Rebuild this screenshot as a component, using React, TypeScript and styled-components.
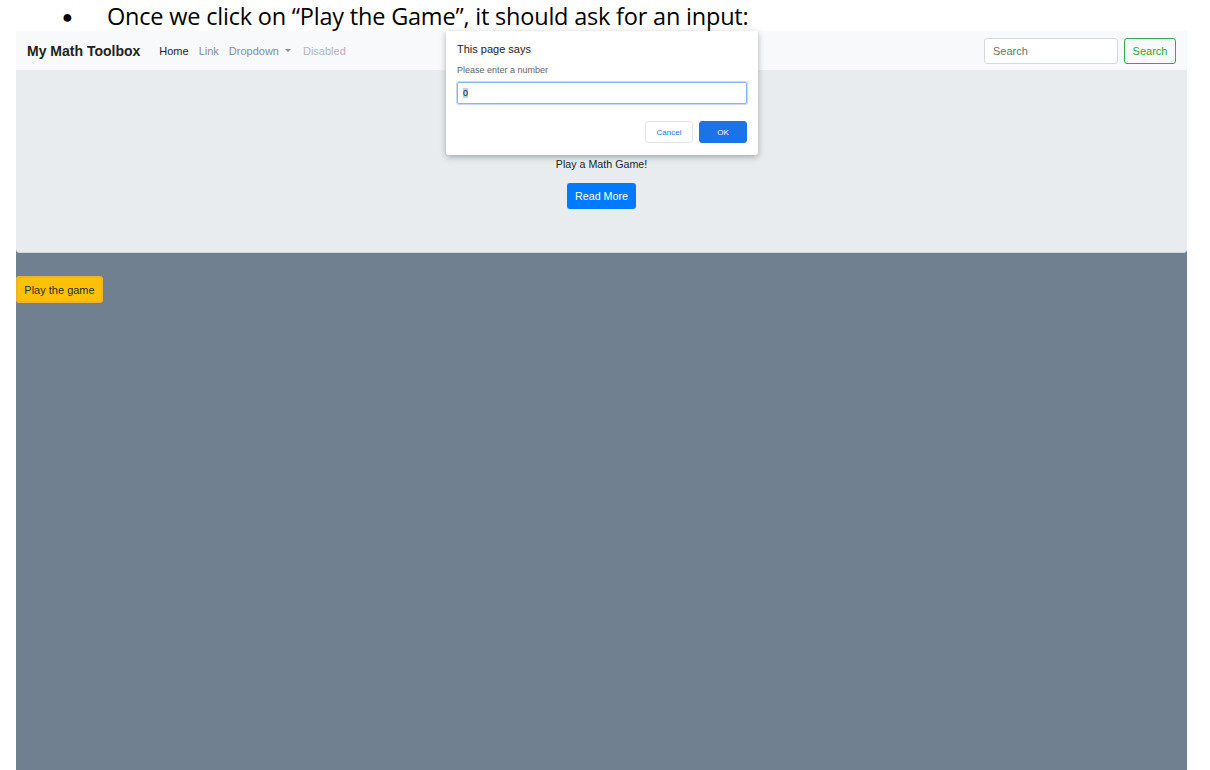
import styled, { createGlobalStyle } from 'styled-components';

const GlobalStyle = createGlobalStyle`
  html, body {
    margin: 0;
    padding: 0;
    background: #ffffff;
  }
  body {
    font-family: "Liberation Sans", Arial, sans-serif;
  }
`;

const Page = styled.div`
  width: 1210px;
  height: 770px;
  overflow: hidden;
  display: flex;
  flex-direction: column;
`;

const Caption = styled.div`
  height: 31px;
  display: flex;
  align-items: center;
  padding-left: 62px;
  font-family: "Open Sans", sans-serif;
  font-size: 23.5px;
  color: #000;
  letter-spacing: -0.2px;
`;

const Bullet = styled.span`
  width: 45px;
  font-size: 18px;
`;

const Shot = styled.div`
  position: relative;
  margin: 0 23px 0 16px;
  flex: 1;
  display: flex;
  flex-direction: column;
  background: #708090;
  font-family: "Liberation Sans", Arial, sans-serif;
`;

const Navbar = styled.nav`
  height: 39px;
  background: #f8f9fa;
  display: flex;
  align-items: center;
  padding: 0 11px;
`;

const Brand = styled.span`
  font-weight: bold;
  font-size: 14px;
  color: #222;
  margin-right: 19px;
`;

const NavLink = styled.span<{ $tone?: 'active' | 'muted' | 'disabled' }>`
  font-size: 11px;
  margin-right: 10px;
  color: ${(p) =>
    p.$tone === 'active' ? '#222' : p.$tone === 'disabled' ? '#b4b6b8' : '#8a8d90'};
  display: inline-flex;
  align-items: center;
  gap: 6px;
`;

const Caret = styled.span`
  width: 0;
  height: 0;
  margin-right: 2px;
  border-left: 3px solid transparent;
  border-right: 3px solid transparent;
  border-top: 3px solid #8a8d90;
`;

const SearchForm = styled.form`
  margin-left: auto;
  display: flex;
  gap: 6px;
`;

const SearchInput = styled.div`
  width: 134px;
  height: 26px;
  box-sizing: border-box;
  border: 1px solid #d6d9dc;
  border-radius: 3px;
  background: #fff;
  color: #6c7075;
  font-size: 11px;
  display: flex;
  align-items: center;
  padding-left: 8px;
`;

const SearchButton = styled.div`
  width: 52px;
  height: 26px;
  box-sizing: border-box;
  border: 1px solid #34a853;
  border-radius: 3px;
  color: #28a745;
  font-size: 11px;
  display: flex;
  align-items: center;
  justify-content: center;
`;

const Jumbotron = styled.div`
  height: 183px;
  background: #e9ecef;
  border-radius: 0 0 4px 4px;
  display: flex;
  flex-direction: column;
  align-items: center;
  justify-content: flex-end;
  padding-bottom: 43px;
  box-sizing: border-box;
  border-bottom: 1px solid #d3d7dc;
`;

const Lead = styled.p`
  margin: 0 0 13px;
  font-size: 10.7px;
  color: #212529;
`;

const PrimaryButton = styled.div`
  height: 26px;
  padding: 0 8px;
  background: #007bff;
  color: #fff;
  font-size: 10.7px;
  border-radius: 3px;
  display: flex;
  align-items: center;
`;

const Content = styled.div`
  flex: 1;
  padding-top: 23px;
`;

const WarningButton = styled.div`
  width: 87px;
  height: 27px;
  box-sizing: border-box;
  background: #ffc107;
  border: 2px solid #e9b52e;
  border-radius: 3px;
  color: #2b2a25;
  font-size: 11px;
  display: flex;
  align-items: center;
  justify-content: center;
`;

const Dialog = styled.div`
  position: absolute;
  top: 0;
  left: 430px;
  width: 312px;
  height: 124px;
  background: #fff;
  box-shadow: 0 2px 6px rgba(0, 0, 0, 0.3);
  border-radius: 0 0 3px 3px;
  padding: 12px 11px 0;
  box-sizing: border-box;
  display: flex;
  flex-direction: column;
`;

const DialogTitle = styled.div`
  font-size: 11px;
  color: #202124;
`;

const DialogMessage = styled.div`
  font-size: 9px;
  color: #5f6368;
  margin-top: 10px;
`;

const DialogInput = styled.div`
  margin-top: 7px;
  height: 22px;
  box-sizing: border-box;
  border: 1px solid #8ab4f8;
  border-radius: 2px;
  box-shadow: 0 0 0 1px #c6dafc;
  font-size: 9px;
  display: flex;
  align-items: center;
  padding-left: 5px;
`;

const Selected = styled.span`
  background: #b3d4fc;
  color: #202124;
`;

const DialogActions = styled.div`
  margin-top: 17px;
  display: flex;
  justify-content: flex-end;
  gap: 6px;
`;

const DialogButton = styled.div<{ $primary?: boolean }>`
  width: 48px;
  height: 22px;
  box-sizing: border-box;
  border-radius: 3px;
  font-size: 8px;
  display: flex;
  align-items: center;
  justify-content: center;
  background: ${(p) => (p.$primary ? '#1a73e8' : '#fff')};
  color: ${(p) => (p.$primary ? '#fff' : '#1a73e8')};
  border: 1px solid ${(p) => (p.$primary ? '#1a73e8' : '#e4e6e8')};
`;

export default function App() {
  return (
    <Page>
      <GlobalStyle />
      <Caption>
        <Bullet>●</Bullet>
        Once we click on “Play the Game”, it should ask for an input:
      </Caption>
      <Shot>
        <Navbar>
          <Brand>My Math Toolbox</Brand>
          <NavLink $tone="active">Home</NavLink>
          <NavLink>Link</NavLink>
          <NavLink>
            Dropdown <Caret />
          </NavLink>
          <NavLink $tone="disabled">Disabled</NavLink>
          <SearchForm>
            <SearchInput>Search</SearchInput>
            <SearchButton>Search</SearchButton>
          </SearchForm>
        </Navbar>
        <Jumbotron>
          <Lead>Play a Math Game!</Lead>
          <PrimaryButton>Read More</PrimaryButton>
        </Jumbotron>
        <Content>
          <WarningButton>Play the game</WarningButton>
        </Content>
        <Dialog>
          <DialogTitle>This page says</DialogTitle>
          <DialogMessage>Please enter a number</DialogMessage>
          <DialogInput>
            <Selected>0</Selected>
          </DialogInput>
          <DialogActions>
            <DialogButton>Cancel</DialogButton>
            <DialogButton $primary>OK</DialogButton>
          </DialogActions>
        </Dialog>
      </Shot>
    </Page>
  );
}
